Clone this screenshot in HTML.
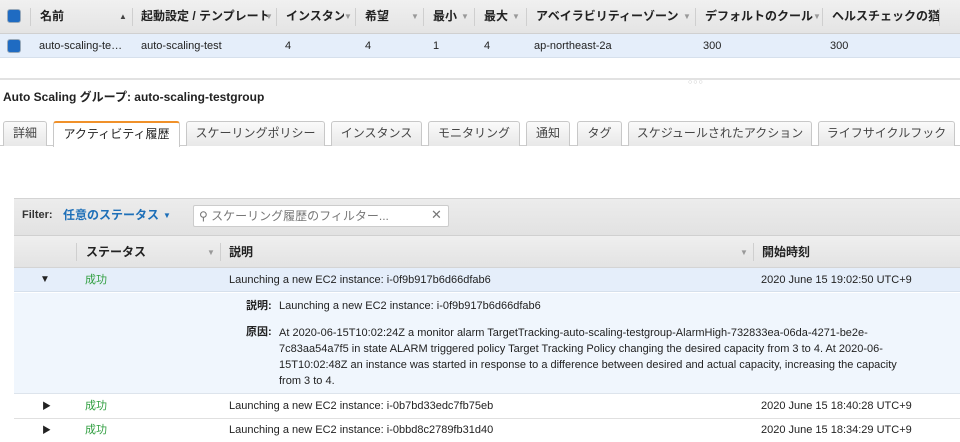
<!DOCTYPE html>
<html><head><meta charset="utf-8"><style>
*{box-sizing:border-box;margin:0;padding:0}
body{width:960px;height:442px;overflow:hidden;background:#fff;font-family:"Liberation Sans","Noto Sans CJK JP",sans-serif;font-size:11px;color:#222;position:relative}
.a{position:absolute;white-space:nowrap;line-height:14px}
.b{font-weight:bold}
.hdr{top:0;left:0;width:960px;height:34px;background:linear-gradient(#f0f0f0,#e4e4e4);border-bottom:1px solid #d0d0d0}
.sep{position:absolute;top:8px;width:1px;height:18px;background:#cfcfcf}
.cb{position:absolute;width:14px;height:14px;border-radius:3px;background:#1f6bc2;border:1px solid #9ab}
.car{position:absolute;color:#999;font-size:8px;line-height:8px}
.h{font-size:12px}
.tab{position:absolute;top:121px;height:25px;border:1px solid #c8c8c8;border-bottom:none;background:linear-gradient(#fafafa,#e8e8e8);border-radius:3px 3px 0 0;font-size:12px;color:#444;text-align:center;line-height:23px}
</style></head><body>
<div class="a hdr"></div>
<div class="cb" style="left:7px;top:9px"></div>
<div class="sep" style="left:30px"></div>
<div class="a b h" style="left:40px;top:9px">名前</div><div class="car" style="left:119px;top:13px;color:#444">▲</div>
<div class="sep" style="left:132px"></div>
<div class="a b h" style="left:141px;top:9px">起動設定 / テンプレート</div><div class="car" style="left:265px;top:13px">▼</div>
<div class="sep" style="left:276px"></div>
<div class="a b h" style="left:286px;top:9px;width:58px;overflow:hidden">インスタンス</div><div class="car" style="left:344px;top:13px">▼</div>
<div class="sep" style="left:355px"></div>
<div class="a b h" style="left:365px;top:9px">希望</div><div class="car" style="left:411px;top:13px">▼</div>
<div class="sep" style="left:423px"></div>
<div class="a b h" style="left:433px;top:9px">最小</div><div class="car" style="left:461px;top:13px">▼</div>
<div class="sep" style="left:474px"></div>
<div class="a b h" style="left:484px;top:9px">最大</div><div class="car" style="left:512px;top:13px">▼</div>
<div class="sep" style="left:526px"></div>
<div class="a b h" style="left:536px;top:9px">アベイラビリティーゾーン</div><div class="car" style="left:683px;top:13px">▼</div>
<div class="sep" style="left:695px"></div>
<div class="a b h" style="left:705px;top:9px;width:108px;overflow:hidden">デフォルトのクールダ</div><div class="car" style="left:813px;top:13px">▼</div>
<div class="sep" style="left:822px"></div>
<div class="a b h" style="left:832px;top:9px;width:108px;overflow:hidden">ヘルスチェックの猶予</div><div class="car" style="left:930px;top:13px">▼</div>
<div class="sep" style="left:939px"></div>
<div class="a" style="left:0;top:34px;width:960px;height:24px;background:#e5eefa;border-bottom:1px solid #d6e0ec"></div>
<div class="cb" style="left:7px;top:39px"></div>
<div class="a" style="left:39px;top:39px">auto-scaling-te…</div>
<div class="a" style="left:141px;top:39px">auto-scaling-test</div>
<div class="a" style="left:285px;top:39px">4</div>
<div class="a" style="left:365px;top:39px">4</div>
<div class="a" style="left:433px;top:39px">1</div>
<div class="a" style="left:484px;top:39px">4</div>
<div class="a" style="left:534px;top:39px">ap-northeast-2a</div>
<div class="a" style="left:703px;top:39px">300</div>
<div class="a" style="left:830px;top:39px">300</div>
<div class="a" style="left:0;top:78px;width:960px;height:2px;background:#e2e2e2"></div>
<div class="a" style="left:688px;top:79px;font-size:7px;color:#bbb;letter-spacing:1px;line-height:8px">○○○</div>
<div class="a b h" style="left:3px;top:90px">Auto Scaling グループ: auto-scaling-testgroup</div>
<div class="a" style="left:0;top:145px;width:960px;height:1px;background:#ccc"></div>
<div class="tab" style="left:3px;width:44px">詳細</div>
<div class="tab" style="left:53px;width:127px;background:#fff;border-top:2px solid #f0912a;height:26px;color:#222">アクティビティ履歴</div>
<div class="tab" style="left:186px;width:139px">スケーリングポリシー</div>
<div class="tab" style="left:331px;width:91px">インスタンス</div>
<div class="tab" style="left:428px;width:92px">モニタリング</div>
<div class="tab" style="left:526px;width:44px">通知</div>
<div class="tab" style="left:577px;width:45px">タグ</div>
<div class="tab" style="left:628px;width:184px">スケジュールされたアクション</div>
<div class="tab" style="left:818px;width:137px">ライフサイクルフック</div>
<div class="a" style="left:14px;top:198px;width:946px;height:37px;background:linear-gradient(#ececec,#e2e2e2);border-top:1px solid #d4d4d4"></div>
<div class="a b" style="left:22px;top:208px;color:#333">Filter:</div>
<div class="a b h" style="left:63px;top:208px;color:#1d6fb8">任意のステータス</div><div class="car" style="left:163px;top:212px;color:#1d6fb8">▼</div>
<div class="a" style="left:193px;top:205px;width:256px;height:22px;background:#fff;border:1px solid #ccc;border-radius:2px"></div>
<div class="a h" style="left:199px;top:209px;color:#777">⚲ スケーリング履歴のフィルター...</div>
<div class="a" style="left:431px;top:208px;font-size:13px;color:#777">✕</div>
<div class="a" style="left:14px;top:235px;width:946px;height:33px;background:linear-gradient(#efefef,#e3e3e3);border-top:1px solid #d0d0d0;border-bottom:1px solid #d4d4d4"></div>
<div class="sep" style="left:76px;top:243px"></div>
<div class="a b h" style="left:86px;top:245px">ステータス</div><div class="car" style="left:207px;top:249px">▼</div>
<div class="sep" style="left:220px;top:243px"></div>
<div class="a b h" style="left:229px;top:245px">説明</div><div class="car" style="left:740px;top:249px">▼</div>
<div class="sep" style="left:753px;top:243px"></div>
<div class="a b h" style="left:762px;top:245px">開始時刻</div>
<div class="a" style="left:14px;top:268px;width:946px;height:24px;background:#e5eefa;border-bottom:1px solid #d6e0ec"></div>
<div class="a" style="left:40px;top:273px;font-size:10px">▼</div>
<div class="a" style="left:85px;top:273px;color:#2f9e3f">成功</div>
<div class="a" style="left:229px;top:273px">Launching a new EC2 instance: i-0f9b917b6d66dfab6</div>
<div class="a" style="left:761px;top:273px">2020 June 15 19:02:50 UTC+9</div>
<div class="a" style="left:14px;top:293px;width:946px;height:101px;background:#f0f6fd;border-bottom:1px solid #dde4ec"></div>
<div class="a b" style="left:246px;top:299px">説明:</div>
<div class="a" style="left:279px;top:299px">Launching a new EC2 instance: i-0f9b917b6d66dfab6</div>
<div class="a b" style="left:246px;top:325px">原因:</div>
<div class="a" style="left:279px;top:325px;white-space:normal;width:640px;line-height:16px">At 2020-06-15T10:02:24Z a monitor alarm TargetTracking-auto-scaling-testgroup-AlarmHigh-732833ea-06da-4271-be2e-7c83aa54a7f5 in state ALARM triggered policy Target Tracking Policy changing the desired capacity from 3 to 4. At 2020-06-15T10:02:48Z an instance was started in response to a difference between desired and actual capacity, increasing the capacity from 3 to 4.</div>
<div class="a" style="left:14px;top:418px;width:946px;height:1px;background:#e0e0e0"></div>
<div class="a" style="left:42px;top:399px;font-size:9px">▶</div>
<div class="a" style="left:85px;top:399px;color:#2f9e3f">成功</div>
<div class="a" style="left:229px;top:399px">Launching a new EC2 instance: i-0b7bd33edc7fb75eb</div>
<div class="a" style="left:761px;top:399px">2020 June 15 18:40:28 UTC+9</div>
<div class="a" style="left:42px;top:423px;font-size:9px">▶</div>
<div class="a" style="left:85px;top:423px;color:#2f9e3f">成功</div>
<div class="a" style="left:229px;top:423px">Launching a new EC2 instance: i-0bbd8c2789fb31d40</div>
<div class="a" style="left:761px;top:423px">2020 June 15 18:34:29 UTC+9</div>
</body></html>
